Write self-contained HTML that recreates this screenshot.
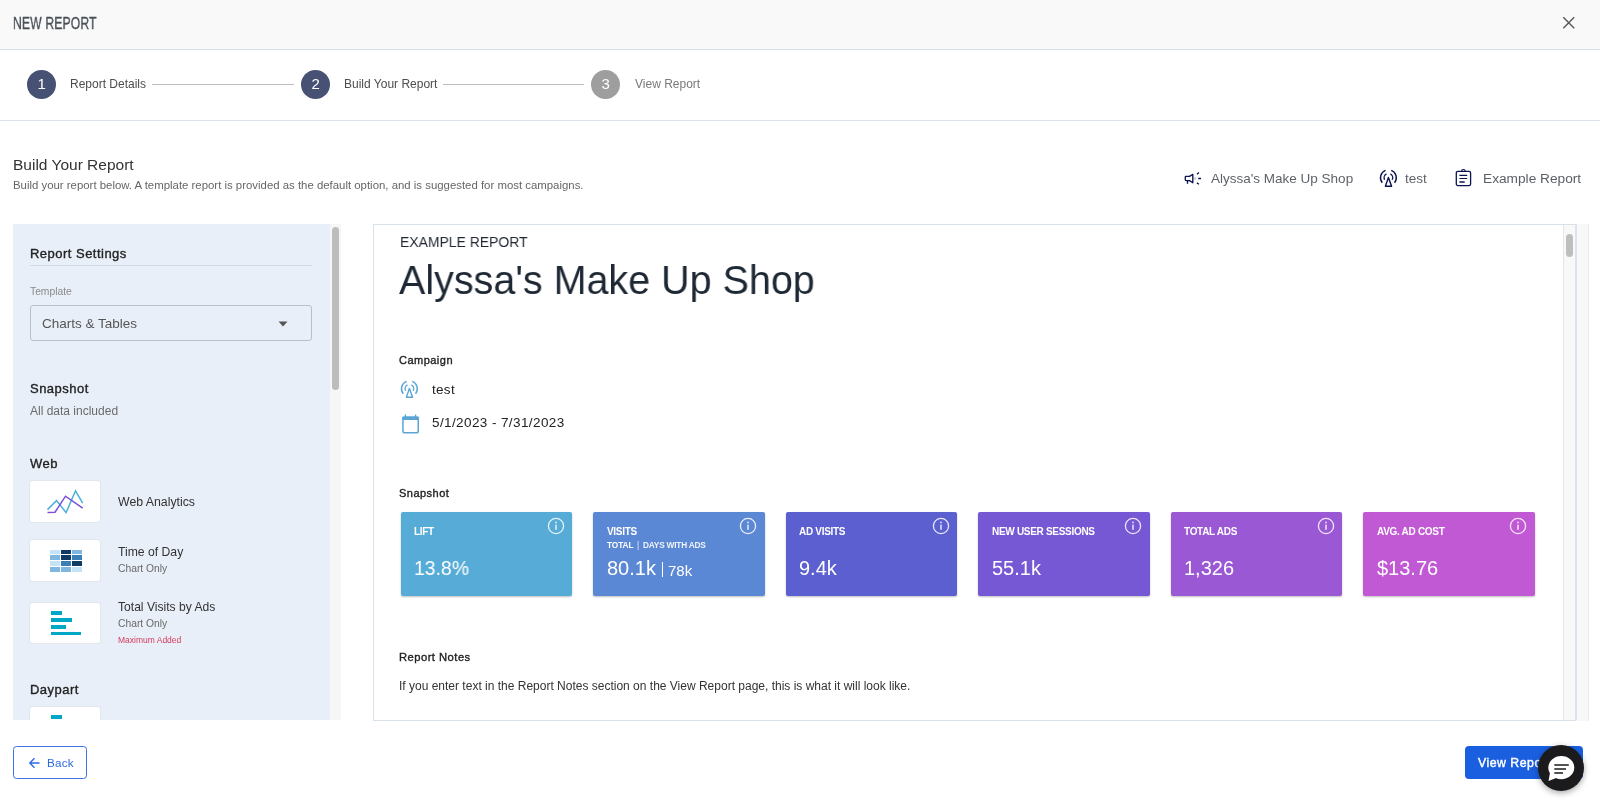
<!DOCTYPE html>
<html><head><meta charset="utf-8"><style>
html,body{margin:0;padding:0;width:1600px;height:799px;overflow:hidden;background:#fff;font-family:"Liberation Sans", sans-serif;}
.t{position:absolute;line-height:1;white-space:nowrap;will-change:transform;}
.r{position:absolute;}
.circ{color:#fff;font-size:15px;line-height:28.4px;will-change:transform;text-align:center;border-radius:50%;}
</style></head><body>
<div class="r" style="left:0px;top:0px;width:1600px;height:49px;background:#f9f9f9"></div>
<div class="r" style="left:0px;top:49px;width:1600px;height:1px;background:#d9e0e9"></div>
<div class="t" style="left:13.00px;top:14.71px;font-size:17px;color:#474d55;font-weight:400;transform:scaleX(0.715);transform-origin:0 0;letter-spacing:0.2px;-webkit-text-stroke:0.35px #474d55">NEW REPORT</div>
<svg class="r" style="left:1560px;top:14px" width="18" height="18" viewBox="0 0 18 18"><path d="M3.3 3.3 L14.2 14.2 M14.2 3.3 L3.3 14.2" stroke="#5c5c5c" stroke-width="1.5" fill="none"/></svg>
<div class="r" style="left:0px;top:120px;width:1600px;height:1px;background:#dde3eb"></div>
<div class="r circ" style="left:27px;top:69.6px;width:29.3px;height:29.3px;background:#465173">1</div>
<div class="t" style="left:70.00px;top:77.94px;font-size:12px;color:#4d4d4d;font-weight:400;">Report Details</div>
<div class="r" style="left:152px;top:84px;width:142px;height:1px;background:#bdbdbd"></div>
<div class="r circ" style="left:301px;top:69.6px;width:29.3px;height:29.3px;background:#465173">2</div>
<div class="t" style="left:344.00px;top:77.94px;font-size:12px;color:#4d4d4d;font-weight:400;">Build Your Report</div>
<div class="r" style="left:443px;top:84px;width:141px;height:1px;background:#bdbdbd"></div>
<div class="r circ" style="left:591px;top:69.6px;width:29.3px;height:29.3px;background:#9e9e9e">3</div>
<div class="t" style="left:634.50px;top:77.94px;font-size:12px;color:#7a7a7a;font-weight:400;">View Report</div>
<div class="t" style="left:13.00px;top:156.78px;font-size:15.5px;color:#333;font-weight:400;">Build Your Report</div>
<div class="t" style="left:13.00px;top:179.85px;font-size:11.4px;color:#666;font-weight:400;">Build your report below. A template report is provided as the default option, and is suggested for most campaigns.</div>
<svg class="r" style="left:1180px;top:165px" width="30" height="25" viewBox="0 0 30 25">
<path d="M5.3 12.1 Q5.3 11.3 6.1 11.3 L9.5 11.3 L12.8 9.4 L12.8 17.7 L9.5 15.6 L6.1 15.6 Q5.3 15.6 5.3 14.8 Z" stroke="#0c1450" stroke-width="1.35" fill="none" stroke-linejoin="round"/>
<path d="M7.5 15.6 V18.8" stroke="#0c1450" stroke-width="1.35"/>
<ellipse cx="15" cy="13.5" rx="0.9" ry="1.6" fill="#c5c9d6"/>
<path d="M16.9 9.3 L19 7.6 M18.2 13.5 H21 M16.9 17.9 L19 19.2" stroke="#0c1450" stroke-width="1.3"/>
</svg>
<div class="t" style="left:1211.40px;top:171.87px;font-size:13.5px;color:#5f6368;font-weight:400;">Alyssa's Make Up Shop</div>
<svg class="r" style="left:1375px;top:165px" width="27.0" height="25.0" viewBox="0 0 27 25">
<path d="M7.26 17.77 A7.9 7.9 0 0 1 10.57 5.42 M16.23 5.42 A7.9 7.9 0 0 1 19.54 17.77 M9.57 14.75 A4.3 4.3 0 0 1 11.45 8.97 M15.35 8.97 A4.3 4.3 0 0 1 17.23 14.75" stroke="#0c1450" stroke-width="1.4" fill="none"/>
<path d="M13.4 12.4 L10.4 21.3 L16.6 21.3 Z" stroke="#0c1450" stroke-width="1.4" fill="none" stroke-linejoin="round"/>
</svg>
<div class="t" style="left:1405.00px;top:171.87px;font-size:13.5px;color:#5f6368;font-weight:400;">test</div>
<svg class="r" style="left:1450px;top:165px" width="28" height="25" viewBox="0 0 28 25">
<rect x="6.3" y="6.3" width="14.3" height="14.3" rx="1.6" stroke="#0c1450" stroke-width="1.3" fill="none"/>
<path d="M11.6 6.3 A1.8 1.8 0 0 1 15.2 6.3" stroke="#0c1450" stroke-width="1.2" fill="none"/>
<path d="M9.4 10.3 H17.2 M9.4 13.5 H17.2" stroke="#0c1450" stroke-width="1.2"/>
<path d="M9.4 17 H14.7" stroke="#0c1450" stroke-width="1.5"/>
</svg>
<div class="t" style="left:1483.00px;top:171.90px;font-size:13.7px;color:#5a5f66;font-weight:400;">Example Report</div>
<div class="r" style="left:13px;top:224px;width:317px;height:496px;background:#e9eff8"></div>
<div class="r" style="left:330px;top:224px;width:11px;height:496px;background:#f6f6f6"></div>
<div class="r" style="left:332px;top:227px;width:7px;height:163px;background:#bdbdbd;border-radius:4px"></div>
<div class="t" style="left:30.00px;top:246.50px;font-size:13px;color:#222;font-weight:400;-webkit-text-stroke:0.35px currentColor;letter-spacing:0.48px">Report Settings</div>
<div class="r" style="left:30px;top:265px;width:282px;height:1px;background:#d3dae4"></div>
<div class="t" style="left:30.00px;top:286.58px;font-size:10.3px;color:#8a8a8a;font-weight:400;">Template</div>
<div class="r" style="left:30px;top:305px;width:280px;height:34px;border:1px solid #b9bfc8;border-radius:3px"></div>
<div class="t" style="left:41.70px;top:316.77px;font-size:13.5px;color:#555;font-weight:400;">Charts &amp; Tables</div>
<svg class="r" style="left:278px;top:321px" width="10" height="6" viewBox="0 0 10 6"><path d="M0.5 0.5 L9.5 0.5 L5 5.5 Z" fill="#555"/></svg>
<div class="t" style="left:30.00px;top:381.50px;font-size:13px;color:#222;font-weight:400;-webkit-text-stroke:0.35px currentColor;letter-spacing:0.48px">Snapshot</div>
<div class="t" style="left:30.00px;top:405.34px;font-size:12px;color:#6a6a6a;font-weight:400;">All data included</div>
<div class="t" style="left:30.00px;top:457.30px;font-size:13px;color:#222;font-weight:400;-webkit-text-stroke:0.35px currentColor;letter-spacing:0.48px">Web</div>
<div class="r" style="left:30px;top:481px;width:70px;height:41px;background:#fff;border-radius:3px;box-shadow:0 0 0 1px #e2e7ee"></div>
<svg class="r" style="left:30px;top:481px" width="70" height="41" viewBox="0 0 70 41">
<polyline points="17.5,28.6 26.5,19.6 36.1,31.6 45.5,9.8 52.7,22.2" stroke="#4ab0d9" stroke-width="1.5" fill="none"/>
<polyline points="17.5,31.6 25,31.2 35.5,15.2 52.7,27.2" stroke="#7b4fd9" stroke-width="1.5" fill="none"/>
</svg>
<div class="t" style="left:118.00px;top:495.69px;font-size:12.3px;color:#333;font-weight:400;">Web Analytics</div>
<div class="r" style="left:30px;top:540px;width:70px;height:41px;background:#fff;border-radius:3px;box-shadow:0 0 0 1px #e2e7ee"></div>
<div class="r" style="left:50px;top:549.5px;width:10px;height:4.8px;background:#c6e2f7"></div>
<div class="r" style="left:61px;top:549.5px;width:10px;height:4.8px;background:#0e3a63"></div>
<div class="r" style="left:72px;top:549.5px;width:10px;height:4.8px;background:#7fb7e0"></div>
<div class="r" style="left:50px;top:555.3px;width:10px;height:4.8px;background:#7fb7e0"></div>
<div class="r" style="left:61px;top:555.3px;width:10px;height:4.8px;background:#0e3a63"></div>
<div class="r" style="left:72px;top:555.3px;width:10px;height:4.8px;background:#3a7fb5"></div>
<div class="r" style="left:50px;top:561.1px;width:10px;height:4.8px;background:#c6e2f7"></div>
<div class="r" style="left:61px;top:561.1px;width:10px;height:4.8px;background:#3a7fb5"></div>
<div class="r" style="left:72px;top:561.1px;width:10px;height:4.8px;background:#0e3a63"></div>
<div class="r" style="left:50px;top:566.9px;width:10px;height:4.8px;background:#7fb7e0"></div>
<div class="r" style="left:61px;top:566.9px;width:10px;height:4.8px;background:#7fb7e0"></div>
<div class="r" style="left:72px;top:566.9px;width:10px;height:4.8px;background:#c6e2f7"></div>
<div class="t" style="left:118.30px;top:545.97px;font-size:12.2px;color:#333;font-weight:400;">Time of Day</div>
<div class="t" style="left:118.30px;top:564.08px;font-size:10.3px;color:#6a6a6a;font-weight:400;">Chart Only</div>
<div class="r" style="left:30px;top:603px;width:70px;height:40px;background:#fff;border-radius:3px;box-shadow:0 0 0 1px #e2e7ee"></div>
<div class="r" style="left:50.8px;top:611px;width:11.4px;height:3.7px;background:#00a8c6"></div>
<div class="r" style="left:50.8px;top:618px;width:21.5px;height:3.7px;background:#00a8c6"></div>
<div class="r" style="left:50.8px;top:625px;width:14.8px;height:3.7px;background:#00a8c6"></div>
<div class="r" style="left:50.8px;top:631.5px;width:30.2px;height:3.7px;background:#00a8c6"></div>
<div class="t" style="left:118.30px;top:600.56px;font-size:12.1px;color:#333;font-weight:400;">Total Visits by Ads</div>
<div class="t" style="left:118.30px;top:619.08px;font-size:10.3px;color:#6a6a6a;font-weight:400;">Chart Only</div>
<div class="t" style="left:118.30px;top:636.30px;font-size:8.5px;color:#d63a5e;font-weight:400;">Maximum Added</div>
<div class="t" style="left:30.00px;top:683.30px;font-size:13px;color:#222;font-weight:400;-webkit-text-stroke:0.35px currentColor;letter-spacing:0.48px">Daypart</div>
<div class="r" style="left:29px;top:706px;width:72px;height:14px;overflow:hidden"><div style="position:absolute;left:1px;top:1px;width:70px;height:41px;background:#fff;border-radius:3px;box-shadow:0 0 0 1px #e2e7ee"></div><div style="position:absolute;left:22px;top:9px;width:11px;height:3.7px;background:#00a8c6"></div></div>
<div class="r" style="left:373px;top:224px;width:1201px;height:495px;border:1px solid #d9e1eb;border-right:2px solid #dce3eb;border-bottom-right-radius:2px;background:#fff"></div>
<div class="r" style="left:1563px;top:225px;width:1px;height:495px;background:#e6e6e6"></div>
<div class="r" style="left:1564px;top:225px;width:11px;height:495px;background:#f8f8f8"></div>
<div class="r" style="left:1566px;top:234px;width:7px;height:23px;background:#bebebe;border-radius:3.5px"></div>
<div class="r" style="left:1577px;top:224px;width:11px;height:497px;background:#f8f8f8"></div>
<div class="r" style="left:1588px;top:224px;width:1px;height:497px;background:#ececec"></div>
<div class="t" style="left:399.50px;top:233.80px;font-size:15px;color:#1f2733;font-weight:400;transform:scaleX(0.93);transform-origin:0 0">EXAMPLE REPORT</div>
<div class="t" style="left:399.00px;top:259.96px;font-size:40.8px;color:#1e2834;font-weight:400;transform:scaleX(0.968);transform-origin:0 0">Alyssa's Make Up Shop</div>
<div class="t" style="left:399.00px;top:355.19px;font-size:11px;color:#222;font-weight:400;-webkit-text-stroke:0.35px currentColor;letter-spacing:0.48px">Campaign</div>
<svg class="r" style="left:395.7px;top:375.6px" width="27.0" height="25.0" viewBox="0 0 27 25">
<path d="M7.26 17.77 A7.9 7.9 0 0 1 10.57 5.42 M16.23 5.42 A7.9 7.9 0 0 1 19.54 17.77 M9.57 14.75 A4.3 4.3 0 0 1 11.45 8.97 M15.35 8.97 A4.3 4.3 0 0 1 17.23 14.75" stroke="#5aa5d6" stroke-width="1.4" fill="none"/>
<path d="M13.4 12.4 L10.4 21.3 L16.6 21.3 Z" stroke="#5aa5d6" stroke-width="1.4" fill="none" stroke-linejoin="round"/>
</svg>
<div class="t" style="left:431.70px;top:383.27px;font-size:13.5px;color:#222;font-weight:400;letter-spacing:0.3px">test</div>
<svg class="r" style="left:395px;top:405px" width="30" height="30" viewBox="0 0 30 30">
<rect x="7.95" y="12.25" width="15.3" height="15.6" rx="1.8" stroke="#5aa5d6" stroke-width="1.5" fill="none"/>
<rect x="7.2" y="11.5" width="16.8" height="3.6" rx="1" fill="#5aa5d6"/>
<path d="M10.4 9.6 V12 M20.6 9.6 V12" stroke="#5aa5d6" stroke-width="1.3"/>
</svg>
<div class="t" style="left:431.70px;top:416.07px;font-size:13.5px;color:#222;font-weight:400;letter-spacing:0.4px">5/1/2023 - 7/31/2023</div>
<div class="t" style="left:399.00px;top:488.19px;font-size:11px;color:#222;font-weight:400;-webkit-text-stroke:0.35px currentColor;letter-spacing:0.48px">Snapshot</div>
<div class="r" style="left:400.7px;top:512px;width:171.5px;height:84px;background:#57acd7;border-radius:2px;box-shadow:0 1px 2px rgba(0,0,0,0.25)"></div>
<div class="t" style="left:414.20px;top:526.83px;font-size:10px;color:#fff;font-weight:700;letter-spacing:-0.3px">LIFT</div>
<div class="t" style="left:414.20px;top:558.27px;font-size:20px;color:#fff;font-weight:400;transform:scaleX(0.97);transform-origin:0 0">13.8%</div>
<svg class="r" style="left:546.7px;top:517px" width="18" height="18" viewBox="0 0 18 18"><circle cx="9" cy="9" r="7.6" stroke="rgba(255,255,255,0.85)" stroke-width="1.3" fill="none"/><rect x="8.3" y="7.6" width="1.4" height="5.2" fill="rgba(255,255,255,0.9)"/><circle cx="9" cy="5.4" r="0.85" fill="rgba(255,255,255,0.9)"/></svg>
<div class="r" style="left:593.2px;top:512px;width:171.5px;height:84px;background:#5b88d4;border-radius:2px;box-shadow:0 1px 2px rgba(0,0,0,0.25)"></div>
<div class="t" style="left:606.70px;top:526.83px;font-size:10px;color:#fff;font-weight:700;letter-spacing:-0.3px">VISITS</div>
<div class="t" style="left:606.70px;top:540.67px;font-size:8.3px;color:#fff;font-weight:700;letter-spacing:-0.1px">TOTAL</div>
<div class="t" style="left:637.20px;top:540.67px;font-size:8.3px;color:rgba(255,255,255,0.8);font-weight:400;">|</div>
<div class="t" style="left:642.70px;top:540.67px;font-size:8.3px;color:rgba(255,255,255,0.9);font-weight:700;letter-spacing:-0.2px">DAYS WITH ADS</div>
<div class="t" style="left:606.70px;top:558.27px;font-size:20px;color:#fff;font-weight:400;">80.1k</div>
<div class="r" style="left:662.2px;top:562px;width:1.3px;height:15px;background:#fff"></div>
<div class="t" style="left:668.20px;top:562.50px;font-size:15px;color:#fff;font-weight:400;">78k</div>
<svg class="r" style="left:739.2px;top:517px" width="18" height="18" viewBox="0 0 18 18"><circle cx="9" cy="9" r="7.6" stroke="rgba(255,255,255,0.85)" stroke-width="1.3" fill="none"/><rect x="8.3" y="7.6" width="1.4" height="5.2" fill="rgba(255,255,255,0.9)"/><circle cx="9" cy="5.4" r="0.85" fill="rgba(255,255,255,0.9)"/></svg>
<div class="r" style="left:785.7px;top:512px;width:171.5px;height:84px;background:#5b5fd0;border-radius:2px;box-shadow:0 1px 2px rgba(0,0,0,0.25)"></div>
<div class="t" style="left:799.20px;top:526.83px;font-size:10px;color:#fff;font-weight:700;letter-spacing:-0.3px">AD VISITS</div>
<div class="t" style="left:799.20px;top:558.27px;font-size:20px;color:#fff;font-weight:400;">9.4k</div>
<svg class="r" style="left:931.7px;top:517px" width="18" height="18" viewBox="0 0 18 18"><circle cx="9" cy="9" r="7.6" stroke="rgba(255,255,255,0.85)" stroke-width="1.3" fill="none"/><rect x="8.3" y="7.6" width="1.4" height="5.2" fill="rgba(255,255,255,0.9)"/><circle cx="9" cy="5.4" r="0.85" fill="rgba(255,255,255,0.9)"/></svg>
<div class="r" style="left:978.2px;top:512px;width:171.5px;height:84px;background:#7658d4;border-radius:2px;box-shadow:0 1px 2px rgba(0,0,0,0.25)"></div>
<div class="t" style="left:991.70px;top:526.83px;font-size:10px;color:#fff;font-weight:700;letter-spacing:-0.3px">NEW USER SESSIONS</div>
<div class="t" style="left:991.70px;top:558.27px;font-size:20px;color:#fff;font-weight:400;">55.1k</div>
<svg class="r" style="left:1124.2px;top:517px" width="18" height="18" viewBox="0 0 18 18"><circle cx="9" cy="9" r="7.6" stroke="rgba(255,255,255,0.85)" stroke-width="1.3" fill="none"/><rect x="8.3" y="7.6" width="1.4" height="5.2" fill="rgba(255,255,255,0.9)"/><circle cx="9" cy="5.4" r="0.85" fill="rgba(255,255,255,0.9)"/></svg>
<div class="r" style="left:1170.7px;top:512px;width:171.5px;height:84px;background:#9a58d4;border-radius:2px;box-shadow:0 1px 2px rgba(0,0,0,0.25)"></div>
<div class="t" style="left:1184.20px;top:526.83px;font-size:10px;color:#fff;font-weight:700;letter-spacing:-0.3px">TOTAL ADS</div>
<div class="t" style="left:1184.20px;top:558.27px;font-size:20px;color:#fff;font-weight:400;">1,326</div>
<svg class="r" style="left:1316.7px;top:517px" width="18" height="18" viewBox="0 0 18 18"><circle cx="9" cy="9" r="7.6" stroke="rgba(255,255,255,0.85)" stroke-width="1.3" fill="none"/><rect x="8.3" y="7.6" width="1.4" height="5.2" fill="rgba(255,255,255,0.9)"/><circle cx="9" cy="5.4" r="0.85" fill="rgba(255,255,255,0.9)"/></svg>
<div class="r" style="left:1363.2px;top:512px;width:171.5px;height:84px;background:#c158d4;border-radius:2px;box-shadow:0 1px 2px rgba(0,0,0,0.25)"></div>
<div class="t" style="left:1376.70px;top:526.83px;font-size:10px;color:#fff;font-weight:700;letter-spacing:-0.3px">AVG. AD COST</div>
<div class="t" style="left:1376.70px;top:558.27px;font-size:20px;color:#fff;font-weight:400;">$13.76</div>
<svg class="r" style="left:1509.2px;top:517px" width="18" height="18" viewBox="0 0 18 18"><circle cx="9" cy="9" r="7.6" stroke="rgba(255,255,255,0.85)" stroke-width="1.3" fill="none"/><rect x="8.3" y="7.6" width="1.4" height="5.2" fill="rgba(255,255,255,0.9)"/><circle cx="9" cy="5.4" r="0.85" fill="rgba(255,255,255,0.9)"/></svg>
<div class="t" style="left:399.00px;top:652.22px;font-size:11.2px;color:#222;font-weight:400;-webkit-text-stroke:0.35px currentColor;letter-spacing:0.48px">Report Notes</div>
<div class="t" style="left:398.70px;top:680.34px;font-size:12px;color:#333;font-weight:400;">If you enter text in the Report Notes section on the View Report page, this is what it will look like.</div>
<div class="r" style="left:13px;top:746px;width:72px;height:31px;border:1px solid #3d72e0;border-radius:3.5px"></div>
<svg class="r" style="left:28px;top:757px" width="13" height="12" viewBox="0 0 13 12"><path d="M11.5 6 H2 M6.5 1.3 L1.8 6 L6.5 10.7" stroke="#2d6ae3" stroke-width="1.4" fill="none"/></svg>
<div class="t" style="left:47.00px;top:756.80px;font-size:11.7px;color:#2e6be0;font-weight:400;letter-spacing:0.2px">Back</div>
<div class="r" style="left:1465px;top:746px;width:118px;height:32.5px;background:#1a5fe0;border-radius:4px"></div>
<div class="t" style="left:1478.40px;top:756.79px;font-size:12.3px;color:#fff;font-weight:400;-webkit-text-stroke:0.4px #fff;letter-spacing:0.5px">View Report</div>
<div class="r" style="left:1538px;top:744.5px;width:46px;height:46px;border-radius:50%;background:#1b1b1d;box-shadow:0 2px 6px rgba(0,0,0,0.35)"></div>
<svg class="r" style="left:1538px;top:744.5px" width="46" height="46" viewBox="0 0 46 46">
<ellipse cx="23.3" cy="22.6" rx="13" ry="11.6" fill="#fff"/>
<path d="M12.5 25 L10.5 36 L19.5 32.5 Z" fill="#fff"/>
<path d="M16.3 20 H30.8 M16.3 24 H28 M16.3 28 H25" stroke="#1b1b1d" stroke-width="1.5"/>
</svg>
</body></html>
